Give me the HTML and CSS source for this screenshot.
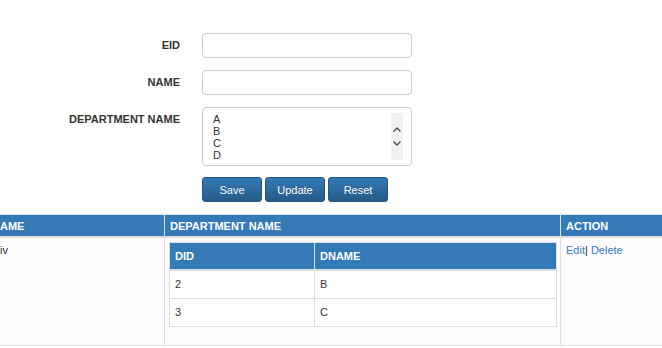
FILE: index.html
```html
<!DOCTYPE html>
<html>
<head>
<meta charset="utf-8">
<link rel="stylesheet" href="styles.css">
</head>
<body>
<div class="page">
  <form class="form">
    <label class="lbl">EID</label>
    <div class="field"><input class="inp" type="text"></div>
    <label class="lbl">NAME</label>
    <div class="field"><input class="inp" type="text"></div>
    <label class="lbl">DEPARTMENT NAME</label>
    <div class="field">
      <div class="listbox">
        <div class="opts">
          <div>A</div><div>B</div><div>C</div><div>D</div>
        </div>
        <div class="sbar">
          <svg class="arr" width="10" height="7" viewBox="0 0 10 7"><path d="M1.5 5.5 L5 2 L8.5 5.5" fill="none" stroke="#505050" stroke-width="1.4"/></svg>
          <svg class="arr" width="10" height="7" viewBox="0 0 10 7"><path d="M1.5 1.5 L5 5 L8.5 1.5" fill="none" stroke="#505050" stroke-width="1.4"/></svg>
        </div>
      </div>
    </div>
    <div></div>
    <div class="btns">
      <button type="button" class="btn">Save</button>
      <button type="button" class="btn">Update</button>
      <button type="button" class="btn">Reset</button>
    </div>
  </form>

  <div class="tablewrap">
    <table class="grid">
      <thead>
        <tr>
          <th class="c1">NAME</th>
          <th class="c2">DEPARTMENT NAME</th>
          <th class="c3">ACTION</th>
        </tr>
      </thead>
      <tbody>
        <tr>
          <td class="c1">Div</td>
          <td class="c2">
            <table class="inner">
              <thead>
                <tr><th class="d1">DID</th><th>DNAME</th></tr>
              </thead>
              <tbody>
                <tr><td>2</td><td>B</td></tr>
                <tr><td>3</td><td>C</td></tr>
              </tbody>
            </table>
          </td>
          <td class="c3"><a href="#" class="lnk">Edit</a>| <a href="#" class="lnk">Delete</a></td>
        </tr>
      </tbody>
    </table>
  </div>
</div>
</body>
</html>
```

FILE: styles.css
```css
html, body {
  margin: 0;
  padding: 0;
  background: #fff;
  overflow: hidden;
}
body {
  font-family: "Liberation Sans", Arial, sans-serif;
  font-size: 11px;
  color: #333;
}
.page {
  width: 662px;
  height: 348px;
  overflow: hidden;
}
.form {
  display: grid;
  grid-template-columns: 180px 210px;
  column-gap: 22px;
  row-gap: 12px;
  padding-top: 33px;
  margin: 0;
}
.lbl {
  text-align: right;
  font-weight: bold;
  line-height: 14px;
  padding-top: 5px;
}
.inp {
  display: block;
  box-sizing: border-box;
  width: 210px;
  height: 25px;
  border: 1px solid #ccc;
  border-radius: 4px;
  margin: 0;
  padding: 0 6px;
  background: #fff;
}
.listbox {
  box-sizing: border-box;
  width: 210px;
  height: 59px;
  border: 1px solid #ccc;
  border-radius: 4px;
  display: flex;
  justify-content: space-between;
  padding: 5px 8px 5px 10px;
}
.opts {
  line-height: 12px;
  font-size: 11px;
  color: #333;
}
.sbar {
  width: 12px;
  height: 47px;
  background: #f3eff3;
  display: flex;
  flex-direction: column;
  align-items: center;
  justify-content: center;
  gap: 7px;
}
.arr { display: block; }
.btns {
  display: flex;
  gap: 3px;
  margin-top: -1px;
}
.btn {
  box-sizing: border-box;
  width: 60px;
  height: 25px;
  padding: 0;
  border: 1px solid #245580;
  border-radius: 3px;
  background: linear-gradient(to bottom, #337ab7 0%, #265a88 100%);
  color: #fff;
  font-family: "Liberation Sans", Arial, sans-serif;
  font-size: 11px;
  text-shadow: 0 -1px 0 rgba(0,0,0,0.2);
}
.tablewrap {
  margin-top: 12px;
  width: 662px;
  overflow: hidden;
}
.grid {
  border-collapse: collapse;
  margin-left: -17px;
  width: 720px;
  table-layout: fixed;
}
.grid > thead > tr > th {
  background: #337ab7;
  color: #fff;
  font-weight: bold;
  text-align: left;
  line-height: 13px;
  padding: 5px 5px 3px;
  border: 1px solid #ddd;
  border-bottom: 2px solid #ddd;
}
.grid > tbody > tr > td {
  background: #fefbfe;
  vertical-align: top;
  border: 1px solid #ddd;
  padding: 4px 4px 18px;
  line-height: 14px;
}
.c1 { width: 167px; }
.c2 { width: 385px; }
.c3 { width: 150px; }
.grid > tbody > tr > td.c1 { padding-left: 8px; padding-top: 5px; }
.grid > tbody > tr > td.c3 { padding-left: 5px; padding-top: 5px; }
.grid > thead > tr > th.c1 { padding-left: 8px; }
.lnk {
  color: #337ab7;
  text-decoration: none;
}
.inner {
  border-collapse: collapse;
  width: 388px;
  background: #fff;
  table-layout: fixed;
}
.inner th {
  background: #337ab7;
  color: #fff;
  font-weight: bold;
  text-align: left;
  line-height: 13px;
  padding: 7px 5px 6px;
  border: 1px solid #ddd;
  border-bottom: 2px solid #ddd;
}
.inner td {
  border: 1px solid #ddd;
  padding: 7px 5px;
  line-height: 13px;
  background: #fff;
}
.inner .d1 { width: 134px; }
```
